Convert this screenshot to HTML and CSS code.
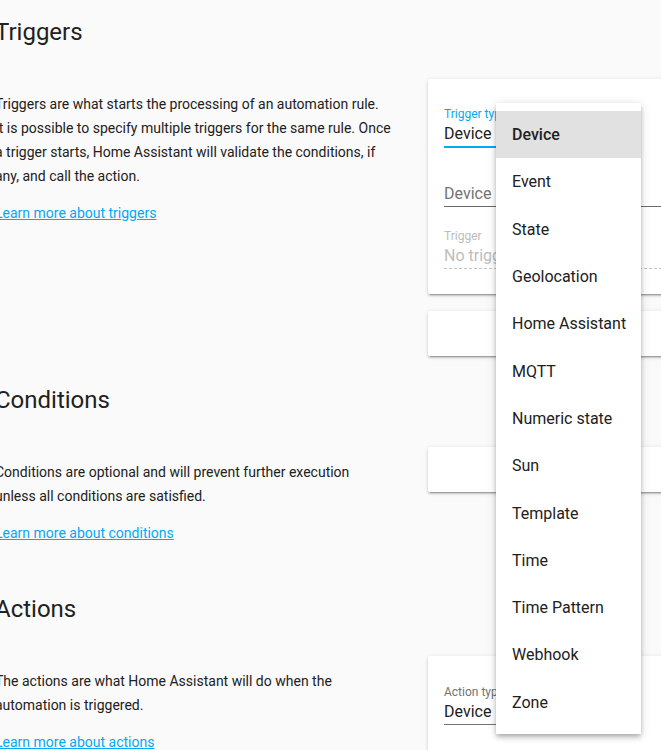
FILE: index.html
```html
<!DOCTYPE html>
<html lang="en">
<head>
    <meta charset="UTF-8">
    <meta name="viewport" content="width=device-width, initial-scale=1.0">
    <title>Automation editor</title>
    <link rel="stylesheet" href="styles.css">
</head>
<body>

<div class="editor">
    <div class="config-section">
        <div class="intro">
            <h2 class="section-title">Triggers</h2>
            <p class="section-text">Triggers are what starts the processing of an automation rule.<br>It is possible to specify multiple triggers for the same rule. Once a trigger starts, Home Assistant will validate the conditions, if any, and call the action.</p>
            <a class="section-link" href="#">Learn more about triggers</a>
        </div>
        <div class="cards">
            <div class="card trigger-card">
                <div class="field select focused">
                    <div class="field-label">Trigger type</div>
                    <div class="field-value">Device</div>

                    <!-- open dropdown of the trigger type select -->
                    <div class="menu">
                        <div class="menu-item selected">Device</div>
                        <div class="menu-item">Event</div>
                        <div class="menu-item">State</div>
                        <div class="menu-item">Geolocation</div>
                        <div class="menu-item">Home Assistant</div>
                        <div class="menu-item">MQTT</div>
                        <div class="menu-item">Numeric state</div>
                        <div class="menu-item">Sun</div>
                        <div class="menu-item">Template</div>
                        <div class="menu-item">Time</div>
                        <div class="menu-item">Time Pattern</div>
                        <div class="menu-item">Webhook</div>
                        <div class="menu-item">Zone</div>
                    </div>
                </div>
                <div class="field device-picker">
                    <div class="field-value">Device</div>
                </div>
                <div class="field disabled">
                    <div class="field-label">Trigger</div>
                    <div class="field-value">No triggers</div>
                </div>
            </div>
            <div class="card add-card"></div>
        </div>
    </div>

    <div class="config-section">
        <div class="intro">
            <h2 class="section-title">Conditions</h2>
            <p class="section-text">Conditions are optional and will prevent further execution unless all conditions are satisfied.</p>
            <a class="section-link" href="#">Learn more about conditions</a>
        </div>
        <div class="cards">
            <div class="card add-card"></div>
        </div>
    </div>

    <div class="config-section">
        <div class="intro">
            <h2 class="section-title">Actions</h2>
            <p class="section-text">The actions are what Home Assistant will do when the automation is triggered.</p>
            <a class="section-link" href="#">Learn more about actions</a>
        </div>
        <div class="cards">
            <div class="card action-card">
                <div class="field select">
                    <div class="field-label">Action type</div>
                    <div class="field-value">Device</div>
                </div>
            </div>
        </div>
    </div>
</div>

</body>
</html>
```

FILE: styles.css
```css
html, body {
    margin: 0;
    height: 750px;
    overflow: hidden;
    background-color: #fafafa;
}
body {
    font-family: Roboto, 'Noto Sans', sans-serif;
    color: #212121;
}
.editor {
    padding-top: 16px;
    margin-left: -5px;
}
.config-section {
    display: flex;
    margin-bottom: 28px;
}
.intro {
    flex: none;
    width: 396px;
    margin-right: 37px;
    padding-bottom: 20px;
}
.section-title {
    margin: 0;
    font-size: 24px;
    font-weight: 400;
    line-height: 32px;
}
.section-text {
    margin: 44px 0 0;
    font-size: 14px;
    line-height: 24px;
}
.section-link {
    display: inline-block;
    margin-top: 13px;
    font-size: 14px;
    line-height: 24px;
    color: #03a9f4;
}
.cards {
    flex: none;
    width: 520px;
    padding-top: 63px;
}
.card {
    position: relative;
    background: #fff;
    border-radius: 2px;
    box-shadow: 0 2px 2px 0 rgba(0, 0, 0, 0.14), 0 1px 5px 0 rgba(0, 0, 0, 0.12), 0 3px 1px -2px rgba(0, 0, 0, 0.2);
}
.card + .card {
    margin-top: 17px;
}
.add-card {
    height: 45px;
}
.trigger-card {
    padding: 27px 16px 25px;
}
.action-card {
    padding: 28px 16px 40px;
}

/* form fields */
.field {
    position: relative;
}
.field-label {
    font-size: 12px;
    line-height: 16px;
    color: #737373;
}
.field-value {
    font-size: 16px;
    line-height: 24px;
}
.select {
    width: 180px;
}
.select .field-value {
    border-bottom: 1px solid #737373;
}
.select.focused .field-label {
    color: #03a9f4;
}
.select.focused .field-value {
    border-bottom: 2px solid #03a9f4;
}
.device-picker {
    margin-top: 34px;
}
.device-picker .field-value {
    color: #737373;
    border-bottom: 1px solid #6b6b6b;
}
.disabled {
    margin-top: 21px;
}
.disabled .field-label,
.disabled .field-value {
    color: #bdbdbd;
}
.disabled .field-value {
    border-bottom: 1px dashed #c4c4c4;
}

/* dropdown list */
.menu {
    position: absolute;
    left: 52px;
    top: -3px;
    z-index: 2;
    width: 145px;
    padding: 8px 0;
    background: #fff;
    box-shadow: 0 2px 4px -1px rgba(0, 0, 0, 0.2), 0 4px 5px 0 rgba(0, 0, 0, 0.14), 0 1px 10px 0 rgba(0, 0, 0, 0.12);
}
.menu-item {
    display: flex;
    align-items: center;
    height: 47.3px;
    padding-left: 16px;
    font-size: 16px;
    color: #212121;
}
.menu-item.selected {
    background: #e1e1e1;
    font-weight: 500;
}
```
